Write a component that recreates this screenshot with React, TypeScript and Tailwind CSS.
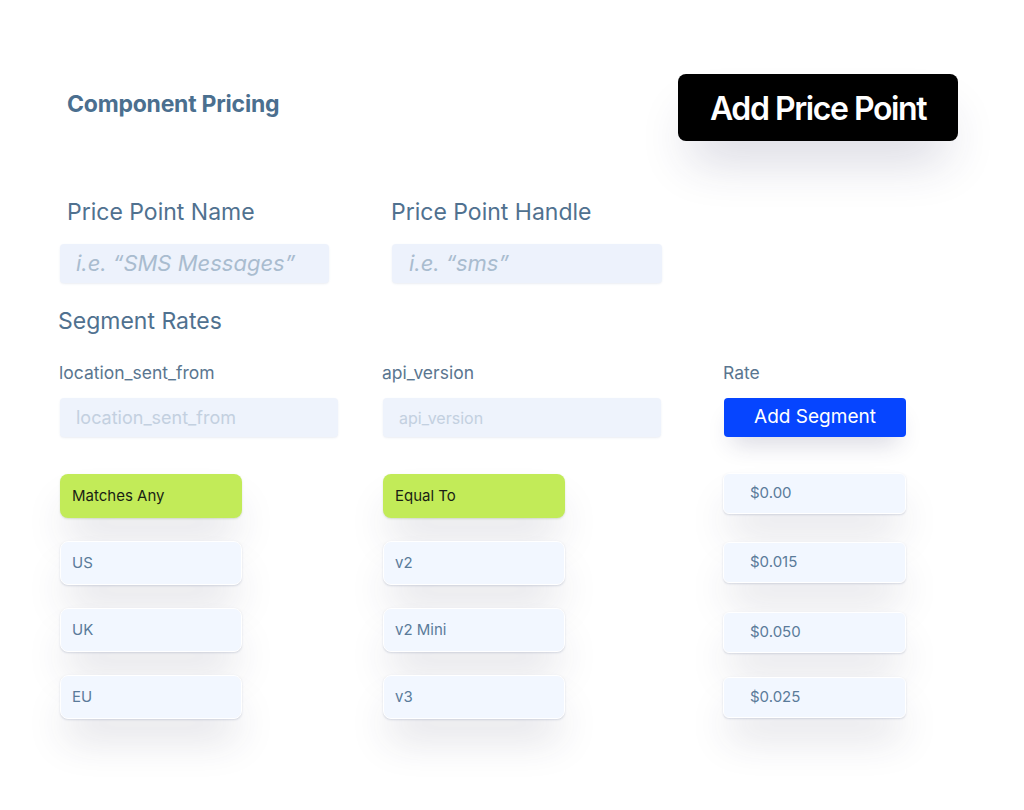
import React from "react";

type Column = {
    label: string;
    placeholder?: string;
    placeholderClass?: string;
    match?: string;
    values: string[];
};

const columns: Column[] = [
    {
        label: "location_sent_from",
        placeholder: "location_sent_from",
        placeholderClass: "text-[18px]",
        match: "Matches Any",
        values: ["US", "UK", "EU"],
    },
    {
        label: "api_version",
        placeholder: "api_version",
        placeholderClass: "text-[16px]",
        match: "Equal To",
        values: ["v2", "v2 Mini", "v3"],
    },
];

const rates = [
    { value: "$0.00", gap: "mt-0" },
    { value: "$0.015", gap: "mt-[28px]" },
    { value: "$0.050", gap: "mt-[29px]" },
    { value: "$0.025", gap: "mt-[24px]" },
];

const cardShadow = "shadow-[0_1px_2px_rgba(60,80,120,0.18),0_26px_40px_-6px_rgba(50,50,80,0.15)]";

function ValueCard({ text, className }: { text: string; className?: string }) {
    return (
        <div
            className={`flex h-[44px] w-[182px] items-center rounded-[8px] border border-white bg-[#f2f7ff] pl-[11px] text-[15px] text-[#5a7b9a] ${cardShadow} ${className ?? ""}`}
        >
            {text}
        </div>
    );
}

export default function App() {
    return (
        <div className="h-[810px] w-[1024px] overflow-hidden bg-white font-['Inter',sans-serif] text-[#50718f]">
            <header className="flex pt-[74px]">
                <h1 className="ml-[67px] mt-[16px] text-[23px] font-bold leading-[28px] tracking-[-0.01em] text-[#4b6f8f]">Component Pricing</h1>
                <button className="ml-auto mr-[66px] flex h-[67px] w-[280px] items-center justify-center rounded-[8px] bg-black pt-[3px] text-[32px] font-semibold tracking-[-0.045em] text-white shadow-[0_30px_50px_-12px_rgba(40,40,90,0.2)]">
                    Add Price Point
                </button>
            </header>

            <div className="ml-[60px] mt-[57px] flex">
                <div className="w-[332px]">
                    <label className="ml-[7px] block text-[23px] leading-[28px] text-[#50718f]">Price Point Name</label>
                    <div className="mt-[18px] flex h-[39px] w-[269px] items-center rounded-[4px] bg-[#edf2fc] pl-[16px] text-[22px] italic text-[#a9bccf] shadow-[0_1px_2px_rgba(120,140,180,0.15)]">
                        i.e. “SMS Messages”
                    </div>
                </div>
                <div>
                    <label className="-ml-[1px] block text-[23px] leading-[28px] text-[#50718f]">Price Point Handle</label>
                    <div className="mt-[18px] flex h-[39px] w-[270px] items-center rounded-[4px] bg-[#edf2fc] pl-[17px] text-[22px] italic text-[#a9bccf] shadow-[0_1px_2px_rgba(120,140,180,0.15)]">
                        i.e. “sms”
                    </div>
                </div>
            </div>

            <h2 className="ml-[58px] mt-[24px] text-[23px] leading-[28px] text-[#50718f]">Segment Rates</h2>

            <div className="ml-[60px] mt-[26px] flex">
                {columns.map((col, i) => (
                    <div key={col.label} className={i === 0 ? "w-[323px]" : "w-[340px]"}>
                        <div className="-ml-[1px] text-[17.5px] leading-[24px] text-[#5a7690]">{col.label}</div>
                        <div
                            className={`mt-[13px] flex h-[39px] w-[278px] items-center rounded-[4px] bg-[#eef3fc] pl-[16px] text-[#c3d0e0] shadow-[0_1px_2px_rgba(120,140,180,0.15)] ${col.placeholderClass}`}
                        >
                            {col.placeholder}
                        </div>
                        <div className="mt-[37px] flex flex-col gap-[23px]">
                            <div
                                className={`flex h-[44px] w-[182px] items-center rounded-[8px] bg-[#c2eb58] pl-[12px] text-[15px] text-[#1a1f14] shadow-[0_1px_2px_rgba(90,120,40,0.2),0_26px_40px_-6px_rgba(50,50,80,0.15)]`}
                            >
                                {col.match}
                            </div>
                            {col.values.map((v) => (
                                <ValueCard key={v} text={v} />
                            ))}
                        </div>
                    </div>
                ))}

                <div>
                    <div className="text-[17.5px] leading-[24px] text-[#5a7690]">Rate</div>
                    <button className="ml-[1px] mt-[13px] flex h-[39px] w-[182px] items-center justify-center rounded-[4px] bg-[#0645ff] text-[19px] text-white shadow-[0_14px_24px_-8px_rgba(40,40,90,0.2)]">
                        Add Segment
                    </button>
                    <div className="mt-[36px] flex flex-col">
                        {rates.map((r) => (
                            <div
                                key={r.value}
                                className={`flex h-[41px] w-[183px] items-center rounded-[6px] border border-white bg-[#f2f7ff] pl-[26px] text-[15px] text-[#5a7b9a] ${cardShadow} ${r.gap}`}
                            >
                                {r.value}
                            </div>
                        ))}
                    </div>
                </div>
            </div>
        </div>
    );
}
